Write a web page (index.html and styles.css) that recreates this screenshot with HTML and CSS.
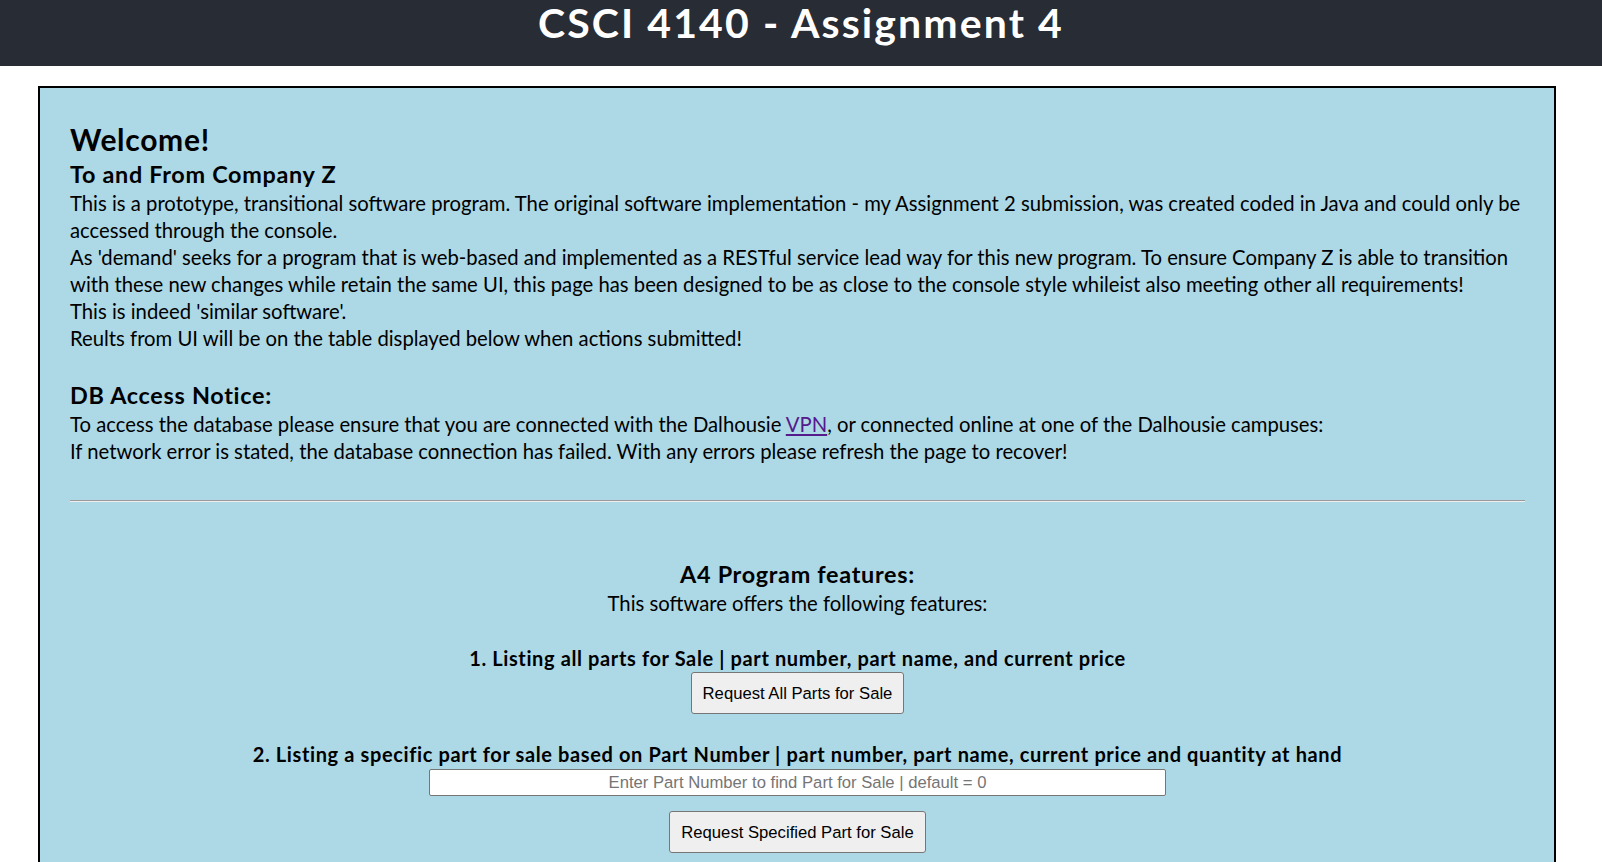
FILE: index.html
```html
<!DOCTYPE html>
<html>
<head>
<meta charset="utf-8">
<title>CSCI 4140 - Assignment 4</title>
<link rel="stylesheet" href="styles.css">
</head>
<body>
<header class="app-header">
  <h1 class="app-title">CSCI 4140 - Assignment 4</h1>
</header>
<main class="panel">
  <h2 class="welcome">Welcome!</h2>
  <h3 class="sub">To and From Company Z</h3>
  <p class="text">This is a prototype, transitional software program. The original software implementation - my Assignment 2 submission, was created coded in Java and could only be accessed through the console.<br>As 'demand' seeks for a program that is web-based and implemented as a RESTful service lead way for this new program. To ensure Company Z is able to transition with these new changes while retain the same UI, this page has been designed to be as close to the console style whileist also meeting other all requirements!<br>This is indeed 'similar software'.<br>Reults from UI will be on the table displayed below when actions submitted!</p>
  <h3 class="sub notice">DB Access Notice:</h3>
  <p class="text">To access the database please ensure that you are connected with the Dalhousie <a class="link" href="#vpn">VPN</a>, or connected online at one of the Dalhousie campuses:<br>If network error is stated, the database connection has failed. With any errors please refresh the page to recover!</p>
  <hr class="divider">
  <section class="features">
    <h3 class="sub">A4 Program features:</h3>
    <p class="text">This software offers the following features:</p>
    <div class="feature first">
      <div class="feature-title">1. Listing all parts for Sale | part number, part name, and current price</div>
      <button class="btn" type="button">Request All Parts for Sale</button>
    </div>
    <div class="feature">
      <div class="feature-title">2. Listing a specific part for sale based on Part Number | part number, part name, current price and quantity at hand</div>
      <input class="field" type="text" placeholder="Enter Part Number to find Part for Sale | default = 0">
      <button class="btn btn-second" type="button">Request Specified Part for Sale</button>
    </div>
  </section>
</main>
</body>
</html>
```
FILE: styles.css
```css
html, body {
  margin: 0;
  padding: 0;
  background: #ffffff;
}

body {
  font-family: "Lato", "Noto Sans", sans-serif;
  font-size: 20.27px;
  line-height: 27px;
  color: #000;
  overflow: hidden;
}

.app-header {
  background: #282c34;
  height: 66px;
  box-sizing: border-box;
  padding-top: 3px;
  display: flex;
  justify-content: center;
  align-items: flex-start;
}

.app-title {
  margin: 0;
  color: #ffffff;
  font-size: 41px;
  line-height: 40px;
  font-weight: 700;
  letter-spacing: 2.1px;
}

.panel {
  box-sizing: border-box;
  width: 1518px;
  margin: 20px 0 0 38px;
  border: 2.5px solid #000;
  background: #add8e6;
  padding: 31px 29px 40px 30px;
  min-height: 900px;
}

.welcome {
  margin: 0;
  font-size: 30px;
  line-height: 40px;
  font-weight: 700;
  letter-spacing: 0.7px;
}

.sub {
  margin: 0;
  font-size: 23.4px;
  line-height: 31px;
  font-weight: 700;
  letter-spacing: 0.7px;
}

.notice {
  margin-top: 28px;
}

.text {
  margin: 0;
}

.link {
  color: #551a8b;
  text-decoration: underline;
}

.divider {
  margin: 35px 0 0;
  border: 0;
  border-top: 1.25px solid #9a9a9a;
  border-bottom: 1.25px solid #eeeeee;
  height: 0;
}

.features {
  margin-top: 57px;
  display: flex;
  flex-direction: column;
  align-items: center;
  text-align: center;
}

.feature {
  display: flex;
  flex-direction: column;
  align-items: center;
  margin-top: 27px;
}

.feature.first {
  margin-top: 28px;
}

.feature-title {
  font-weight: 700;
  font-size: 20px;
  letter-spacing: 0.62px;
}

.btn {
  box-sizing: border-box;
  font-family: "Liberation Sans", Arial, sans-serif;
  font-size: 16.67px;
  line-height: 19px;
  color: #000;
  background: #efefef;
  border: 1.25px solid #767676;
  border-radius: 3px;
  padding: 10px 11px;
  height: 42px;
}

.btn-second {
  margin-top: 15px;
  height: 42px;
}

.field {
  box-sizing: border-box;
  width: 737px;
  height: 27px;
  margin-top: 1px;
  font-family: "Liberation Sans", Arial, sans-serif;
  font-size: 16.67px;
  text-align: center;
  border: 1.25px solid #767676;
  border-radius: 2px;
  background: #fff;
  padding: 1px 2px;
}

.field::placeholder {
  color: #757575;
}
```
